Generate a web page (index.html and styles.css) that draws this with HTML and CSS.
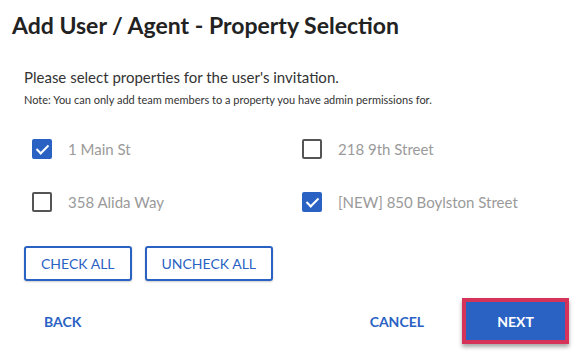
FILE: index.html
```html
<!DOCTYPE html>
<html lang="en">
<head>
  <meta charset="UTF-8" />
  <title>Add User / Agent - Property Selection</title>
  <link rel="stylesheet" href="styles.css">
</head>
<body>
  <div class="dialog">
    <h2 class="dialog-title">Add User / Agent - Property Selection</h2>

    <div class="dialog-body">
      <p class="lead">Please select properties for the user's invitation.</p>
      <p class="note">Note: You can only add team members to a property you have admin permissions for.</p>

      <ul class="props">
        <li><label><span class="box checked"></span> 1 Main St</label></li>
        <li><label><span class="box"></span> 218 9th Street</label></li>
        <li><label><span class="box"></span> 358 Alida Way</label></li>
        <li><label><span class="box checked"></span> [NEW] 850 Boylston Street</label></li>
      </ul>

      <div class="bulk">
        <button class="btn-outline">Check All</button>
        <button class="btn-outline">Uncheck All</button>
      </div>
    </div>

    <div class="dialog-actions">
      <button class="btn-text">Back</button>
      <div class="right">
        <button class="btn-text">Cancel</button>
        <span class="highlight"><button class="btn-primary">Next</button></span>
      </div>
    </div>
  </div>
</body>
</html>
```

FILE: styles.css
```css
body {
  margin: 0;
  font-family: Lato, sans-serif;
  color: #222;
  background: #fff;
}

.dialog {
  width: 579px;
  height: 354px;
}

.dialog-title {
  margin: 0;
  padding: 10px 12px 0;
  font-size: 23px;
  font-weight: 700;
  line-height: 30px;
}

.dialog-body {
  padding: 0 24px;
}

.lead {
  margin: 27px 0 0;
  font-size: 15px;
  line-height: 20px;
  color: #333;
}

.note {
  margin: 6px 0 0;
  font-size: 11px;
  line-height: 14px;
  color: #333;
}

.props {
  list-style: none;
  margin: 32px 0 0 8px;
  padding: 0;
  display: grid;
  grid-template-columns: 270px 240px;
  row-gap: 33px;
}

.props label {
  display: flex;
  align-items: center;
  gap: 16px;
  font-size: 15px;
  color: #9a9a9a;
}

.box {
  box-sizing: border-box;
  width: 20px;
  height: 20px;
  border: 2px solid #555;
  border-radius: 2px;
  position: relative;
}

.box.checked {
  background: #2a62c4;
  border-color: #2a62c4;
}

.box.checked::after {
  content: "";
  position: absolute;
  left: 5px;
  top: 1px;
  width: 5px;
  height: 10px;
  border: solid #fff;
  border-width: 0 2px 2px 0;
  transform: rotate(45deg);
}

.bulk {
  display: flex;
  gap: 13px;
  margin-top: 34px;
}

button {
  font-family: inherit;
  font-size: 14px;
  text-transform: uppercase;
  cursor: pointer;
}

.btn-outline {
  height: 35px;
  padding: 0 15px;
  background: #fff;
  color: #2a62c4;
  border: 2px solid #2a62c4;
  border-radius: 3px;
  box-shadow: 0 1px 2px rgba(0, 0, 0, 0.2);
}

.dialog-actions {
  display: flex;
  justify-content: space-between;
  align-items: center;
  padding: 17px 10px 0 24px;
}

.right {
  display: flex;
  align-items: center;
  gap: 18px;
}

.btn-text {
  background: none;
  border: none;
  color: #2a62c4;
  font-weight: 700;
  padding: 8px 20px;
}

.highlight {
  display: inline-block;
  border: 4px solid #d6335a;
  box-shadow: 0 3px 4px rgba(0, 0, 0, 0.35);
}

.btn-primary {
  display: block;
  width: 99px;
  height: 38px;
  background: #2a62c4;
  color: #fff;
  font-weight: 700;
  border: none;
}
```
